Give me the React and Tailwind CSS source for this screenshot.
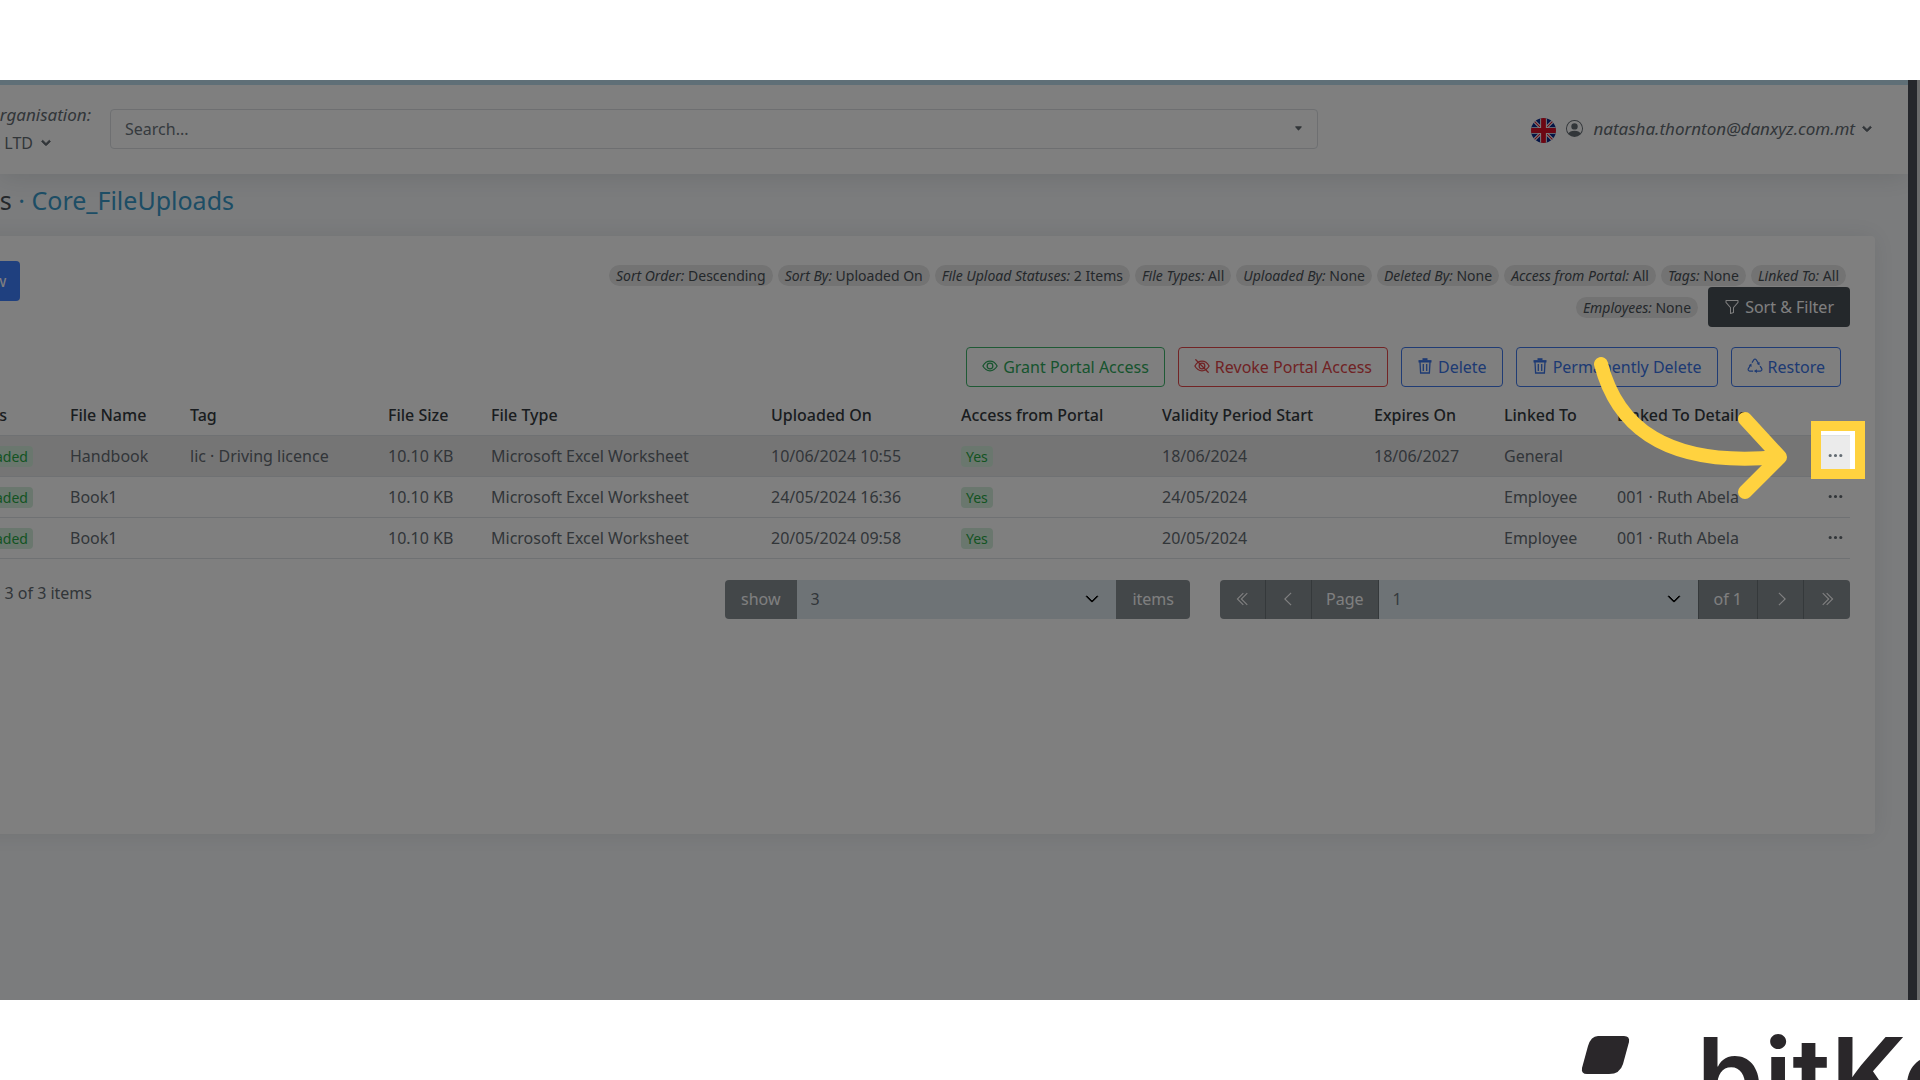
import { LiaRecycleSolid, LiaAngleLeftSolid, LiaAngleRightSolid, LiaAngleDoubleLeftSolid, LiaAngleDoubleRightSolid } from "react-icons/lia";
import { BsPersonCircle, BsChevronDown, BsThreeDots, BsCaretDownFill, BsFunnel } from "react-icons/bs";
import { FaChevronDown } from "react-icons/fa";

const EyeIcon = ({ slashed }) => (
  <svg viewBox="0 0 18 16" className="mb-[2px] size-4" fill="none" stroke="currentColor" strokeWidth="1.4" strokeLinecap="round">
    <path d="M1 8c2-3.600 4.800-5.400 8-5.400S15 4.400 17 8c-2 3.600-4.800 5.400-8 5.400S3 11.600 1 8z" />
    <circle cx="9" cy="8" r="3.200" />
    {slashed && <path d="M2 1l14 14" />}
  </svg>
);

const EyeSlashIcon = () => <EyeIcon slashed />;

const TrashIcon = () => (
  <svg viewBox="0 0 16 16" className="mb-[2px] size-4" fill="none" stroke="currentColor" strokeWidth="1.3">
    <path d="M5.500 1.200h5" strokeWidth="2" />
    <path d="M1.500 3.300h13" strokeWidth="2.400" />
    <path d="M3 4l.6 11h8.800L13 4M6.300 6v7M9.700 6v7" />
  </svg>
);

const RestoreIcon = () => <LiaRecycleSolid className="-mx-[2px] mb-[2px] size-5" />;

const filters = [
  ["Sort Order", "Descending"],
  ["Sort By", "Uploaded On"],
  ["File Upload Statuses", "2 Items"],
  ["File Types", "All"],
  ["Uploaded By", "None"],
  ["Deleted By", "None"],
  ["Access from Portal", "All"],
  ["Tags", "None"],
  ["Linked To", "All"],
];

const actions = [
  { label: "Grant Portal Access", icon: EyeIcon, color: "border-[#3fb56b] text-[#2fa85c]" },
  { label: "Revoke Portal Access", icon: EyeSlashIcon, color: "border-[#e4494b] text-[#e04548]" },
  { label: "Delete", icon: TrashIcon, color: "border-[#4079ea] text-[#3b74e6]" },
  { label: "Permanently Delete", icon: TrashIcon, color: "border-[#4079ea] text-[#3b74e6]" },
  { label: "Restore", icon: RestoreIcon, color: "border-[#4079ea] text-[#3b74e6]" },
];

const columns = [
  { title: "Status", width: "w-[111px]" },
  { title: "File Name", width: "w-[120px]" },
  { title: "Tag", width: "w-[198px]" },
  { title: "File Size", width: "w-[103px]" },
  { title: "File Type", width: "w-[280px]" },
  { title: "Uploaded On", width: "w-[190px]" },
  { title: "Access from Portal", width: "w-[201px]" },
  { title: "Validity Period Start", width: "w-[212px]" },
  { title: "Expires On", width: "w-[130px]" },
  { title: "Linked To", width: "w-[113px]" },
  { title: "Linked To Details", width: "w-[210px]" },
];

const rows = [
  { name: "Handbook", tag: "lic · Driving licence", uploaded: "10/06/2024 10:55", start: "18/06/2024", expires: "18/06/2027", linked: "General", details: "" },
  { name: "Book1", tag: "", uploaded: "24/05/2024 16:36", start: "24/05/2024", expires: "", linked: "Employee", details: "001 · Ruth Abela" },
  { name: "Book1", tag: "", uploaded: "20/05/2024 09:58", start: "20/05/2024", expires: "", linked: "Employee", details: "001 · Ruth Abela" },
];

const Pill = ({ name, value }) => (
  <span className="rounded-full bg-[#e6e6e6] px-[7px] text-sm leading-[21px] whitespace-nowrap text-[#495057]">
    <em>{name}:</em> {value}
  </span>
);

const Badge = ({ children }) => (
  <span className="inline-flex h-[21px] items-center rounded bg-[#d5efdd] px-[5px] text-sm text-[#28a745]">{children}</span>
);

const Flag = () => (
  <svg viewBox="0 0 24 24" className="mt-1 size-[25px]" aria-label="English">
    <clipPath id="flag-round">
      <circle cx="12" cy="12" r="12" />
    </clipPath>
    <g clipPath="url(#flag-round)">
      <rect width="24" height="24" fill="#0a2a8c" />
      <path d="M0 0l24 24M24 0L0 24" stroke="#fff" strokeWidth="3" />
      <path d="M0 0l24 24M24 0L0 24" stroke="#d80f27" strokeWidth="1" />
      <path d="M12 0v24M0 12h24" stroke="#fff" strokeWidth="6.400" />
      <path d="M12 0v24M0 12h24" stroke="#d80f27" strokeWidth="4.600" />
    </g>
  </svg>
);

// Everything outside the frame is dimmed by its own huge shadow.
const Spotlight = () => (
  <>
    <div className="pointer-events-none absolute -top-[15px] -right-[15px] z-10 h-[58px] w-[54px] border-10 border-[#ffd23f] shadow-[0_0_0_3000px_rgba(0,0,0,0.5)]" />
    <svg viewBox="0 0 200 150" className="pointer-events-none absolute -top-[86px] right-[59px] z-20 h-[150px] w-[200px]" fill="none" stroke="#ffd23f" strokeWidth="14" strokeLinecap="round" strokeLinejoin="round">
      <path d="M10 14C26 76 74 118 188 107" />
      <path d="M154 69L189 107L154 142" />
    </svg>
  </>
);

const Header = () => (
  <header className="flex h-[94px] items-center border-t-[5px] border-[#bedfee] bg-white pr-9 pb-[2px] shadow-[0_4px_24px_rgba(40,50,60,0.12)]">
    <div className="flex w-[91px] shrink-0 flex-col items-end gap-1 whitespace-nowrap">
      <em className="text-[17px] leading-6">Organisation:</em>
      <button className="mr-10 flex items-center gap-2">
        DANXYZ LTD
        <FaChevronDown className="size-[10px] stroke-[48px]" />
      </button>
    </div>
    <div className="ml-[19px] flex h-10 flex-1 items-center rounded border border-[#dcdfe3] px-[14px]">
      <input aria-label="Search" placeholder="Search..." className="min-w-0 flex-1 outline-none placeholder:text-[#6c757d]" />
      <BsCaretDownFill className="size-[9px]" />
    </div>
    <div className="ml-[213px] flex items-center gap-[10px]">
      <Flag />
      <BsPersonCircle className="size-[17px]" />
      <button className="flex items-center gap-[7px] text-[17px] leading-6 italic">
        natasha.thornton@danxyz.com.mt
        <FaChevronDown className="size-[10px] stroke-[48px]" />
      </button>
    </div>
  </header>
);

const Toolbar = () => (
  <>
    <div className="flex items-start justify-between">
      <button className="h-10 rounded bg-[#3f80ff] px-[14px] text-white">New</button>
      <div className="flex flex-col items-end">
        <div className="mr-1 flex gap-[5px] pt-1 pb-px">
          {filters.map(([name, value]) => (
            <Pill key={name} name={name} value={value} />
          ))}
        </div>
        <div className="flex items-center gap-[10px]">
          <Pill name="Employees" value="None" />
          <button className="flex h-10 items-center gap-[5px] rounded bg-[#495057] px-4 text-white">
            <BsFunnel className="size-4" />
            Sort &amp; Filter
          </button>
        </div>
      </div>
    </div>
    <div className="mt-5 mr-[9px] flex justify-end gap-[13px]">
      {actions.map(({ label, icon: Icon, color }) => (
        <button key={label} className={`flex h-10 items-center gap-[5px] rounded border px-[15px] ${color}`}>
          <Icon />
          {label}
        </button>
      ))}
    </div>
  </>
);

const FilesTable = () => (
  <table className="mt-2 w-full table-fixed text-left">
    <thead>
      <tr className="h-10 border-b border-[#dee2e6] text-[#343a40]">
        {columns.map(({ title, width }) => (
          <th key={title} className={`font-medium ${width}`}>{title}</th>
        ))}
        <th aria-label="Options" />
      </tr>
    </thead>
    <tbody>
      {rows.map((row, i) => (
        <tr key={i} className={`h-[41px] border-b border-[#dee2e6] ${i === 0 ? "bg-[#ebebeb]" : ""}`}>
          <td><Badge>Uploaded</Badge></td>
          <td>{row.name}</td>
          <td>{row.tag}</td>
          <td>10.10 KB</td>
          <td>Microsoft Excel Worksheet</td>
          <td>{row.uploaded}</td>
          <td><Badge>Yes</Badge></td>
          <td>{row.start}</td>
          <td>{row.expires}</td>
          <td>{row.linked}</td>
          <td>{row.details}</td>
          <td className="relative">
            <button aria-label="Row options" className="mr-[6px] ml-auto block">
              <BsThreeDots className="size-[17px]" />
            </button>
            {i === 0 && <Spotlight />}
          </td>
        </tr>
      ))}
    </tbody>
  </table>
);

const Select = ({ label, value }) => (
  <div className="relative flex flex-1">
    <select aria-label={label} className="w-full appearance-none bg-[#dde7ec] px-[14px] outline-none" defaultValue={value}>
      <option>{value}</option>
    </select>
    <BsChevronDown className="pointer-events-none absolute top-3 right-[17px] size-[14px] stroke-1 text-black" />
  </div>
);

const PageButton = ({ label, icon: Icon }) => (
  <button aria-label={label} className="flex w-[46px] items-center justify-center bg-[#868e93]">
    <Icon className="size-[18px]" />
  </button>
);

const Pagination = () => (
  <div className="mt-[21px] flex">
    <p className="flex h-[26px] w-[133px] items-center justify-end whitespace-nowrap">1 to 3 of 3 items</p>
    <div className="ml-auto flex h-[39px] w-[465px] overflow-hidden rounded">
      <span className="flex items-center bg-[#868e93] px-4 text-white">show</span>
      <Select label="Items per page" value="3" />
      <span className="flex items-center bg-[#868e93] px-4 text-white">items</span>
    </div>
    <div className="ml-[30px] flex h-[39px] w-[630px] divide-x divide-[#6a7277] overflow-hidden rounded text-white">
      <PageButton label="First page" icon={LiaAngleDoubleLeftSolid} />
      <PageButton label="Previous page" icon={LiaAngleLeftSolid} />
      <span className="flex items-center bg-[#868e93] px-[14px]">Page</span>
      <div className="flex flex-1 text-[#6c757d]">
        <Select label="Page" value="1" />
      </div>
      <span className="flex items-center bg-[#868e93] px-[15px]">of 1</span>
      <PageButton label="Next page" icon={LiaAngleRightSolid} />
      <PageButton label="Last page" icon={LiaAngleDoubleRightSolid} />
    </div>
  </div>
);

export default function App() {
  return (
    <div className="flex h-screen flex-col overflow-hidden bg-white pt-20 font-['Noto_Sans',sans-serif] text-base text-[#646c73]">
      <div className="flex flex-1 overflow-hidden">
        <div className="min-w-0 flex-1 bg-[#f7f9fb]">
          <Header />
          <h1 className="flex h-[62px] w-[234px] items-center justify-end pb-2 text-[25px] whitespace-pre text-[#3a9bcb]">
            <span className="text-[#495057]">File Uploads</span> · Core_FileUploads
          </h1>
          <main className="mr-[33px] -ml-[66px] h-[598px] rounded bg-white p-[25px] shadow-[0_0_24px_rgba(40,50,60,0.1)]">
            <Toolbar />
            <FilesTable />
            <Pagination />
          </main>
        </div>
        <div className="w-3 border-r-3 border-l-9 border-r-[#d4d6d9] border-l-[#4a4e58]" />
      </div>
      <footer className="flex h-20 shrink-0 items-start justify-end overflow-hidden text-[#2a272a]">
        <svg viewBox="0 0 50 40" className="mt-9 h-10 w-[50px]" fill="currentColor">
          <path d="M17 0h26q6 0 5 6l-6 22q-3 10-14 10H6q-6 0-5-6L7 10q3-10 10-10z" />
        </svg>
        <span className="-mr-12 ml-[66px] pt-3 font-['Inter',sans-serif] text-[108px] leading-[130px] font-semibold">bitKo</span>
      </footer>
    </div>
  );
}
